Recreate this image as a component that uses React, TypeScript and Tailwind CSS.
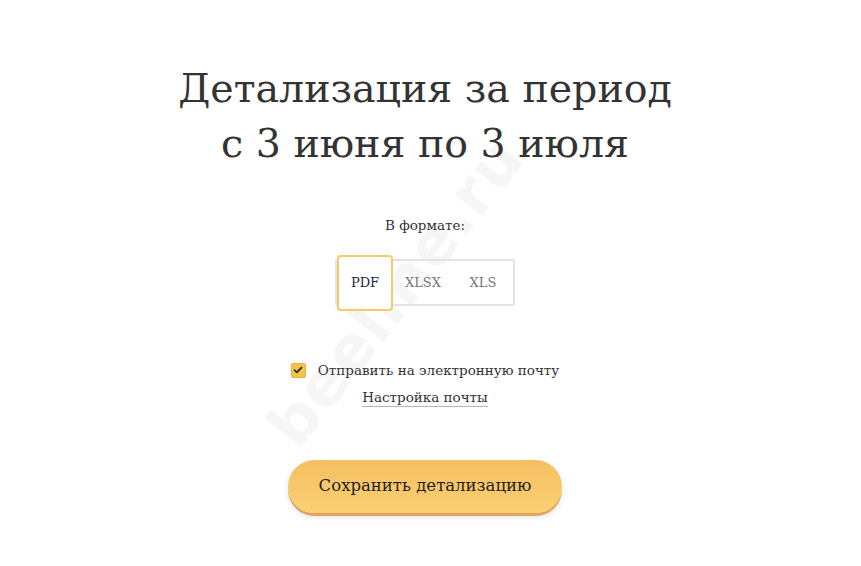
import { useState } from "react";

const formats = ["PDF", "XLSX", "XLS"];

export default function App() {
  const [format, setFormat] = useState("PDF");
  const [sendMail, setSendMail] = useState(true);

  return (
    <div className="relative w-[861px] h-[566px] overflow-hidden bg-white font-['DejaVu_Serif',serif] text-[#333]">
      {/* faint diagonal watermark */}
      <div className="pointer-events-none absolute left-[210px] top-[245px] -rotate-[52deg] select-none font-['DejaVu_Sans',sans-serif] text-[62px] font-bold tracking-wide text-[#f6f6f6]">
        beeline.ru
      </div>

      <div className="relative flex w-[850px] flex-col items-center pt-[61px]">
        <h1 className="text-center text-[39.5px] leading-[55px] font-normal text-[#333]">
          Детализация за период
          <br />
          с 3 июня по 3 июля
        </h1>

        <p className="mt-[44px] text-[13.5px] text-[#333]">В формате:</p>

        <div className="mt-[24px] flex items-center">
          <div className="flex h-[47px] items-center rounded-[3px] border-2 border-[#e3e3e3]">
            {formats.map((f) => {
              const active = f === format;
              return (
                <button
                  key={f}
                  onClick={() => setFormat(f)}
                  className={
                    active
                      ? "-my-[6px] flex h-[56px] w-[56px] items-center justify-center rounded-[4px] border-2 border-[#f8c96b] bg-white text-[13px] text-[#1d2740]"
                      : "flex h-full w-[60px] items-center justify-center text-[13px] text-[#777]"
                  }
                >
                  {f}
                </button>
              );
            })}
          </div>
        </div>

        <label className="mt-[54px] flex cursor-pointer items-center gap-[12px] text-[13.5px] text-[#333]">
          <span
            onClick={() => setSendMail(!sendMail)}
            className="flex h-[15px] w-[15px] items-center justify-center rounded-[3px] bg-[#f6c24b] shadow-[inset_0_0_0_1px_#e9b23c]"
          >
            {sendMail && (
              <svg width="10" height="8" viewBox="0 0 10 8">
                <path d="M1.5 4.2 L3.9 6.4 L8.5 1.6" fill="none" stroke="#2b2b2b" strokeWidth="1.8" strokeLinecap="round" strokeLinejoin="round" />
              </svg>
            )}
          </span>
          Отправить на электронную почту
        </label>

        <a className="mt-[7px] border-b border-[#b5b5b5] text-[13.5px] leading-[18px] text-[#333]">
          Настройка почты
        </a>

        <button className="mt-[53px] h-[53px] w-[274px] rounded-full bg-gradient-to-b from-[#f4bf63] to-[#fbd072] text-[16.5px] text-[#1e1e1e] shadow-[0_3px_0_#e3a45c,0_4px_6px_rgba(0,0,0,0.12)]">
          Сохранить детализацию
        </button>
      </div>
    </div>
  );
}
